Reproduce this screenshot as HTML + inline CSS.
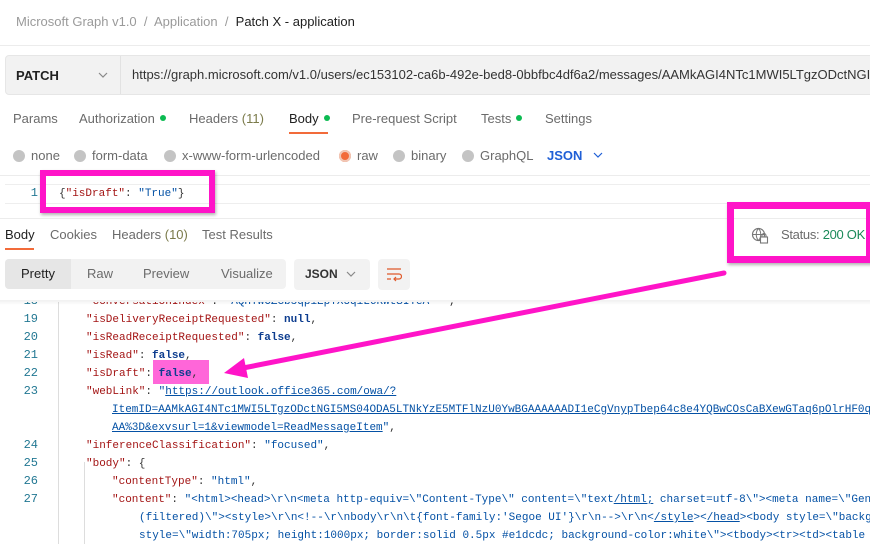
<!DOCTYPE html>
<html><head><meta charset="utf-8"><style>
*{margin:0;padding:0;box-sizing:border-box}
body{width:870px;height:544px;overflow:hidden;background:#fff;font-family:"Liberation Sans",sans-serif;font-size:13px;color:#6b6b6b;position:relative}
.a{position:absolute;white-space:nowrap}
.dot{display:inline-block;width:6px;height:6px;border-radius:50%;background:#0cbb52;margin-left:5px;vertical-align:2px}
.rad{display:inline-block;width:12px;height:12px;border-radius:50%;background:#c4c4c4;vertical-align:-2px;margin-right:6px}
.code{font-family:"Liberation Mono",monospace;font-size:11px;line-height:18px}
.k{color:#a31515}.s{color:#0451a5}.b{color:#0d3d8f;font-weight:bold}.p{color:#333}
.u{text-decoration:underline;text-decoration-color:#0451a5}
.ln{position:absolute;width:38px;text-align:right;color:#237893;font-family:"Liberation Mono",monospace;font-size:12px}
</style></head><body>
<div class="a" style="left:16px;top:14px;font-size:13px;color:#9a9a9a">Microsoft Graph v1.0 &nbsp;/&nbsp; Application &nbsp;/&nbsp; <span style="color:#212121">Patch X - application</span></div>
<div class="a" style="left:0;top:45px;width:870px;height:1px;background:#ececec"></div>
<div class="a" style="left:5px;top:55px;width:870px;height:40px;background:#f2f2f2;border:1px solid #e6e6e6;border-radius:4px"></div>
<div class="a" style="left:120px;top:56px;width:1px;height:38px;background:#e2e2e2"></div>
<div class="a" style="left:16px;top:68px;color:#212121;font-weight:bold;font-size:13px">PATCH</div>
<svg class="a" style="left:98px;top:71px" width="10" height="8"><path d="M1 2l4 4 4-4" fill="none" stroke="#888" stroke-width="1.2"/></svg>
<div class="a" style="left:132px;top:67px;color:#333">https://graph.microsoft.com/v1.0/users/ec153102-ca6b-492e-bed8-0bbfbc4df6a2/messages/AAMkAGI4NTc1MWI5LTgzODctNGI5</div>
<div class="a" style="left:13px;top:111px">Params</div>
<div class="a" style="left:79px;top:111px">Authorization<span class="dot"></span></div>
<div class="a" style="left:189px;top:111px">Headers <span style="color:#7a7a4a">(11)</span></div>
<div class="a" style="left:289px;top:111px;color:#212121">Body<span class="dot"></span></div>
<div class="a" style="left:289px;top:132px;width:39px;height:2px;background:#f26b3a"></div>
<div class="a" style="left:352px;top:111px">Pre-request Script</div>
<div class="a" style="left:481px;top:111px">Tests<span class="dot"></span></div>
<div class="a" style="left:545px;top:111px">Settings</div>
<div class="a" style="left:13px;top:148px"><span class="rad"></span>none</div>
<div class="a" style="left:74px;top:148px"><span class="rad"></span>form-data</div>
<div class="a" style="left:164px;top:148px"><span class="rad"></span>x-www-form-urlencoded</div>
<div class="a" style="left:339px;top:148px"><span class="rad" style="background:#f26b3a;box-shadow:inset 0 0 0 2px #f1c7b6"></span>raw</div>
<div class="a" style="left:393px;top:148px"><span class="rad"></span>binary</div>
<div class="a" style="left:462px;top:148px"><span class="rad"></span>GraphQL</div>
<div class="a" style="left:547px;top:148px;color:#1f5fd6;font-weight:bold">JSON</div>
<svg class="a" style="left:593px;top:151px" width="10" height="8"><path d="M1 2l4 4 4-4" fill="none" stroke="#1f5fd6" stroke-width="1.2"/></svg>
<div class="a" style="left:0;top:175px;width:870px;height:1px;background:#ececec"></div>
<div class="a" style="left:5px;top:184px;width:870px;height:20px;border-top:1px solid #eee;border-bottom:1px solid #eee"></div>
<div class="ln" style="left:0;top:186px">1</div>
<div class="a code" style="left:59px;top:185px"><span class="p">{</span><span class="k">"isDraft"</span><span class="p">: </span><span class="s">"True"</span><span class="p">}</span></div>
<div class="a" style="left:0;top:218px;width:870px;height:1px;background:#ececec"></div>
<div class="a" style="left:5px;top:227px;color:#212121">Body</div>
<div class="a" style="left:5px;top:248px;width:29px;height:2px;background:#f26b3a"></div>
<div class="a" style="left:50px;top:227px">Cookies</div>
<div class="a" style="left:112px;top:227px">Headers <span style="color:#7a7a4a">(10)</span></div>
<div class="a" style="left:202px;top:227px">Test Results</div>
<svg class="a" style="left:751px;top:227px" width="18" height="17" viewBox="0 0 18 17"><circle cx="7.5" cy="7.5" r="6" fill="none" stroke="#777" stroke-width="1.2"/><path d="M1.5 7.5h12M7.5 1.5c-3 3-3 9 0 12M7.5 1.5c3 3 3 9 0 12" fill="none" stroke="#777" stroke-width="1"/><rect x="9.5" y="10" width="7" height="6" fill="#fff" stroke="#777" stroke-width="1.1"/><path d="M11 10V8.5a2 2 0 014 0V10" fill="none" stroke="#777" stroke-width="1.1"/></svg>
<div class="a" style="left:781px;top:227px;letter-spacing:-0.3px">Status: <span style="color:#1b8a5a">200 OK</span></div>
<div class="a" style="left:5px;top:259px;width:281px;height:30px;background:#f2f2f2;border-radius:4px"></div>
<div class="a" style="left:5px;top:259px;width:66px;height:30px;background:#e6e6e6;border-radius:4px 0 0 4px"></div>
<div class="a" style="left:21px;top:266px;color:#212121">Pretty</div>
<div class="a" style="left:87px;top:266px">Raw</div>
<div class="a" style="left:143px;top:266px">Preview</div>
<div class="a" style="left:221px;top:266px">Visualize</div>
<div class="a" style="left:294px;top:259px;width:76px;height:31px;background:#f2f2f2;border-radius:4px"></div>
<div class="a" style="left:305px;top:267px;color:#333;font-weight:bold;font-size:12px">JSON</div>
<svg class="a" style="left:346px;top:270px" width="10" height="8"><path d="M1 2l4 4 4-4" fill="none" stroke="#888" stroke-width="1.2"/></svg>
<div class="a" style="left:378px;top:259px;width:32px;height:31px;background:#f2f2f2;border-radius:4px"></div>
<svg class="a" style="left:386px;top:266px" width="16" height="16"><path d="M1 3h14M1 8h12a2.5 2.5 0 010 5H8M1 13h4M10 11l-2 2 2 2" fill="none" stroke="#e05a2b" stroke-width="1.2"/></svg>
<div class="a" style="left:0;top:302px;width:870px;height:242px;overflow:hidden">
<div class="a" style="left:58px;top:0;width:1px;height:242px;background:#ddd"></div>
<div class="a" style="left:84px;top:160px;width:1px;height:82px;background:#ddd"></div>
<div class="ln" style="left:0;top:-8px">18</div>
<div class="ln" style="left:0;top:10px">19</div>
<div class="ln" style="left:0;top:28px">20</div>
<div class="ln" style="left:0;top:46px">21</div>
<div class="ln" style="left:0;top:64px">22</div>
<div class="ln" style="left:0;top:82px">23</div>
<div class="ln" style="left:0;top:136px">24</div>
<div class="ln" style="left:0;top:154px">25</div>
<div class="ln" style="left:0;top:172px">26</div>
<div class="ln" style="left:0;top:190px">27</div>
<div class="a" style="left:153px;top:58px;width:56px;height:24px;background:#ff66d9"></div>
<div class="a code" style="left:86px;top:-9px">
<div><span class="k">"conversationIndex"</span><span class="p">: </span><span class="s">"AQHYWCZGb5qpiEpYXUqiL6RWtSIYeA=="</span><span class="p">,</span></div>
<div><span class="k">"isDeliveryReceiptRequested"</span><span class="p">: </span><span class="b">null</span><span class="p">,</span></div>
<div><span class="k">"isReadReceiptRequested"</span><span class="p">: </span><span class="b">false</span><span class="p">,</span></div>
<div><span class="k">"isRead"</span><span class="p">: </span><span class="b">false</span><span class="p">,</span></div>
<div><span class="k">"isDraft"</span><span class="p">: </span><span class="b">false</span><span class="p">,</span></div>
<div><span class="k">"webLink"</span><span class="p">: </span><span class="s">"<span class="u">https://outlook.office365.com/owa/?</span></span></div>
<div style="padding-left:26px" class="s u">ItemID=AAMkAGI4NTc1MWI5LTgzODctNGI5MS04ODA5LTNkYzE5MTFlNzU0YwBGAAAAAADI1eCgVnypTbep64c8e4YQBwCOsCaBXewGTaq6pOlrHF0q</div>
<div style="padding-left:26px"><span class="s u">AA%3D&amp;exvsurl=1&amp;viewmodel=ReadMessageItem</span><span class="s">"</span><span class="p">,</span></div>
<div><span class="k">"inferenceClassification"</span><span class="p">: </span><span class="s">"focused"</span><span class="p">,</span></div>
<div><span class="k">"body"</span><span class="p">: {</span></div>
<div style="padding-left:26px"><span class="k">"contentType"</span><span class="p">: </span><span class="s">"html"</span><span class="p">,</span></div>
<div style="padding-left:26px"><span class="k">"content"</span><span class="p">: </span><span class="s">"&lt;html&gt;&lt;head&gt;\r\n&lt;meta http-equiv=\"Content-Type\" content=\"text<span class="u">/html;</span> charset=utf-8\"&gt;&lt;meta name=\"Gen</span></div>
<div style="padding-left:53px" class="s">(filtered)\"&gt;&lt;style&gt;\r\n&lt;!--\r\nbody\r\n\t{font-family:'Segoe UI'}\r\n--&gt;\r\n&lt;<span class="u">/style</span>&gt;&lt;<span class="u">/head</span>&gt;&lt;body style=\"backg</div>
<div style="padding-left:53px" class="s">style=\"width:705px; height:1000px; border:solid 0.5px #e1dcdc; background-color:white\"&gt;&lt;tbody&gt;&lt;tr&gt;&lt;td&gt;&lt;table</div>
</div>
</div>
<div class="a" style="left:0;top:300px;width:870px;height:5px;background:linear-gradient(rgba(0,0,0,.06),rgba(0,0,0,0))"></div>
<div class="a" style="left:40px;top:170px;width:175px;height:43px;border:6px solid #ff14c8;box-shadow:1px 2px 3px rgba(0,0,0,.3)"></div>
<div class="a" style="left:727px;top:202px;width:146px;height:61px;border:7px solid #ff14c8;box-shadow:1px 2px 3px rgba(0,0,0,.3)"></div>
<svg class="a" style="left:0;top:0" width="870" height="544"><line x1="724" y1="273" x2="238" y2="369" stroke="#ff14c8" stroke-width="5" stroke-linecap="round"/><path d="M224 373L244 358L248 378Z" fill="#ff14c8"/></svg>
</body></html>
